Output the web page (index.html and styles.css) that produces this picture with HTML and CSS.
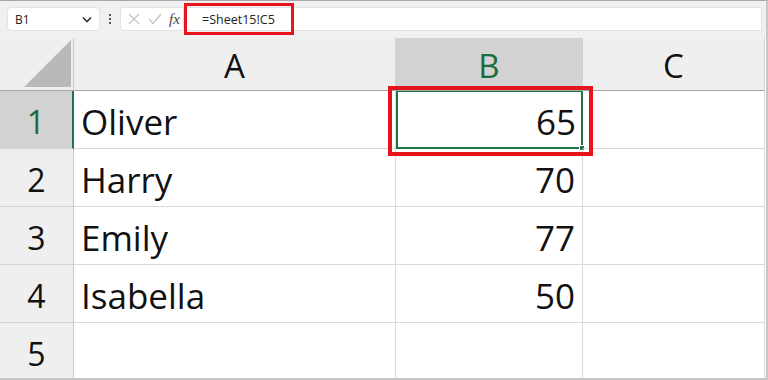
FILE: index.html
```html
<!DOCTYPE html>
<html lang="en">
<head>
    <meta charset="utf-8">
    <link rel="stylesheet" href="styles.css">
</head>
<body>
<div class="frame">
    <div class="toolbar">
        <div class="namebox">
            <span>B1</span>
            <svg width="10" height="7" viewBox="0 0 10 7"><path d="M1 1.5 L5 5.5 L9 1.5" fill="none" stroke="#333" stroke-width="1.6"/></svg>
        </div>
        <div class="dots"><i></i><i></i><i></i></div>
        <div class="fxgroup">
            <svg width="12" height="12" viewBox="0 0 12 12"><path d="M1 1 L11 11 M11 1 L1 11" stroke="#c4c4c4" stroke-width="1.2"/></svg>
            <svg width="14" height="12" viewBox="0 0 14 12"><path d="M1 6 L5 10.5 L13 1" fill="none" stroke="#c4c4c4" stroke-width="1.2"/></svg>
            <span class="fx">fx</span>
        </div>
        <div class="formula">
            <span class="ftext">=Sheet15!C5</span>
            <div class="mark mark-formula"></div>
        </div>
    </div>
    <div class="sheet">
        <div class="grid">
            <div class="corner"><span class="tri"></span></div>
            <div class="colhead">A</div>
            <div class="colhead sel">B</div>
            <div class="colhead">C</div>

            <div class="rowhead sel">1</div>
            <div class="cell">Oliver</div>
            <div class="cell num active">65<span class="handle"></span></div>
            <div class="cell"></div>

            <div class="rowhead">2</div>
            <div class="cell">Harry</div>
            <div class="cell num">70</div>
            <div class="cell"></div>

            <div class="rowhead">3</div>
            <div class="cell">Emily</div>
            <div class="cell num">77</div>
            <div class="cell"></div>

            <div class="rowhead">4</div>
            <div class="cell">Isabella</div>
            <div class="cell num">50</div>
            <div class="cell"></div>

            <div class="rowhead">5</div>
            <div class="cell"></div>
            <div class="cell num"></div>
            <div class="cell"></div>
        </div>
        <div class="mark mark-cell"></div>
    </div>
</div>
</body>
</html>
```

FILE: styles.css
```css
* {
    margin: 0;
    padding: 0;
    box-sizing: border-box;
}
body {
    background: #fff;
    font-family: "Open Sans", "Noto Sans", sans-serif;
}
.frame {
    width: 768px;
    height: 380px;
    overflow: hidden;
    border-top: 1px solid #a8a8a8;
    border-right: 2px solid #c6c6c6;
    border-bottom: 2px solid #c6c6c6;
    background: #f1f0f0;
}
.toolbar {
    height: 37px;
    display: flex;
    align-items: center;
    padding: 0 0 1px 7px;
    background: #f1f0f0;
}
.namebox {
    width: 93px;
    height: 24px;
    background: #fff;
    border: 1px solid #e3e3e3;
    border-radius: 4px;
    display: flex;
    align-items: center;
    justify-content: space-between;
    padding: 0 7px 0 7px;
    font-size: 12px;
    color: #222;
}
.dots {
    width: 20px;
    display: flex;
    flex-direction: column;
    align-items: center;
    gap: 2px;
}
.dots i {
    width: 2px;
    height: 2px;
    background: #555;
}
.fxgroup {
    width: 63px;
    height: 24px;
    background: #fff;
    border: 1px solid #e3e3e3;
    border-right: none;
    border-radius: 4px 0 0 4px;
    display: flex;
    align-items: center;
    gap: 8px;
    padding-left: 7px;
}
.fx {
    font-family: "Liberation Serif", serif;
    font-style: italic;
    font-size: 15px;
    color: #444;
    margin-left: -1px;
}
.formula {
    position: relative;
    flex: 1;
    height: 24px;
    background: #fff;
    border: 1px solid #e3e3e3;
    margin-right: 4px;
    display: flex;
    align-items: center;
    padding-left: 18px;
    font-size: 12.5px;
    color: #222;
}
.mark {
    position: absolute;
    border: 3px solid #e8141b;
}
.mark-formula {
    left: 0;
    top: -5px;
    width: 110px;
    height: 32px;
}
.sheet {
    position: relative;
    background: #fff;
}
.grid {
    display: grid;
    grid-template-columns: 74px 322px 187px 182px;
    grid-template-rows: 53px repeat(5, 58px);
}
.corner {
    background: #f0efef;
    border-right: 1px solid #c8c8c8;
    border-bottom: 1px solid #a6a6a6;
    display: flex;
    justify-content: flex-end;
    align-items: flex-end;
    padding: 0 2px 3px 0;
}
.tri {
    width: 47px;
    height: 47px;
    background: #b9b9b9;
    clip-path: polygon(100% 0, 100% 100%, 0 100%);
}
.colhead {
    background: #f0efef;
    border-right: 1px solid #d2d2d2;
    border-bottom: 1px solid #a6a6a6;
    display: flex;
    align-items: center;
    justify-content: center;
    font-size: 33px;
    color: #111;
    padding-top: 3px;
}
.colhead.sel {
    background: #d2d2d2;
    color: #1d6b3d;
}
.rowhead {
    background: #f0efef;
    border-right: 1px solid #c8c8c8;
    border-bottom: 1px solid #d2d2d2;
    display: flex;
    align-items: center;
    justify-content: center;
    font-size: 32px;
    color: #111;
    padding-top: 3px;
}
.rowhead.sel {
    background: #d2d2d2;
    color: #1d6b3d;
    border-right: 2px solid #217346;
}
.cell {
    position: relative;
    border-right: 1px solid #dadada;
    border-bottom: 1px solid #dadada;
    display: flex;
    align-items: center;
    padding: 3px 7px 0;
    font-size: 35px;
    color: #111;
}
.cell.num {
    justify-content: flex-end;
}
.cell.active {
    border: 2px solid #217346;
    border-top: 1px solid #217346;
    padding-right: 5px;
}
.handle {
    position: absolute;
    right: -4px;
    bottom: -4px;
    width: 6px;
    height: 6px;
    background: #217346;
    border: 1px solid #fff;
}
.mark-cell {
    left: 388px;
    top: 48px;
    width: 205px;
    height: 70px;
    border-width: 4px;
}
```
